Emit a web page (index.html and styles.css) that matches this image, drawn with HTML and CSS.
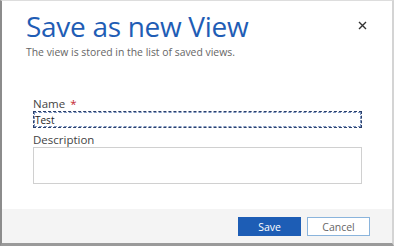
FILE: index.html
```html
<!DOCTYPE html>
<html lang="en">
<head>
    <meta charset="UTF-8">
    <meta name="viewport" content="width=device-width, initial-scale=1.0">
    <title>Save as new View</title>
    <link rel="stylesheet" href="styles.css">
</head>
<body>
    <div class="dialog">
        <div class="header">
            <div class="titles">
                <h1 class="title">Save as new View</h1>
                <p class="subtitle">The view is stored in the list of saved views.</p>
            </div>
            <button class="close" aria-label="Close">
                <svg width="9" height="9" viewBox="0 0 9 9"><path d="M1 1L8 8M8 1L1 8" stroke="#333" stroke-width="1.4"/></svg>
            </button>
        </div>
        <div class="body">
            <label class="label">Name <span class="required">*</span></label>
            <input type="text" class="input focused" value="Test">
            <label class="label">Description</label>
            <textarea class="textarea"></textarea>
        </div>
        <div class="footer">
            <button class="button primary">Save</button>
            <button class="button secondary">Cancel</button>
        </div>
    </div>
</body>
</html>
```

FILE: styles.css
```css
* {
    box-sizing: border-box;
}

body {
    margin: 0;
    font-family: "Open Sans", "Noto Sans", sans-serif;
    background: #fff;
}

.dialog {
    width: 394px;
    height: 246px;
    border-top: 1px solid #ddd;
    border-left: 2px solid #8c8c8c;
    border-right: 2px solid #d4d4d4;
    border-bottom: 3px solid #9a9a9a;
    display: flex;
    flex-direction: column;
    background: #fff;
}

.header {
    display: flex;
    justify-content: space-between;
    padding: 7px 0 0 24px;
}

.title {
    margin: 0;
    font-size: 28px;
    font-weight: 400;
    color: #1f5db5;
    line-height: 36px;
    letter-spacing: -0.3px;
}

.subtitle {
    margin: 1px 0 0;
    font-size: 10.4px;
    color: #666;
    line-height: 14px;
}

.close {
    background: none;
    border: none;
    padding: 0;
    width: 12px;
    height: 12px;
    margin: 11px 24px 0 0;
    display: flex;
    align-items: center;
    justify-content: center;
}

.body {
    flex: 1;
    display: flex;
    flex-direction: column;
    padding: 38px 30px 0 31px;
}

.label {
    font-size: 11.5px;
    color: #444;
    line-height: 14px;
}

.required {
    color: #c4262e;
    margin-left: 2px;
}

.input {
    height: 17px;
    margin: 0 0 5px;
    border: 1px dashed #2a3f6b;
    outline: 1px dashed #7d95bf;
    outline-offset: -2px;
    font-family: inherit;
    font-size: 10px;
    padding: 0 1px;
    color: #222;
}

.textarea {
    height: 37px;
    margin-top: 0;
    border: 1px solid #d0d0d0;
    resize: none;
    font-family: inherit;
}

.footer {
    height: 34px;
    background: #f4f4f4;
    display: flex;
    justify-content: flex-end;
    align-items: flex-start;
    gap: 6px;
    padding: 8px 22px 0 0;
}

.button {
    width: 63px;
    height: 19px;
    font-family: inherit;
    font-size: 10.5px;
    padding: 0;
}

.button.primary {
    background: #1d5db5;
    border: 1px solid #1d5db5;
    color: #fff;
}

.button.secondary {
    background: #fff;
    border: 1px solid #8ab4dc;
    color: #666;
}
```
